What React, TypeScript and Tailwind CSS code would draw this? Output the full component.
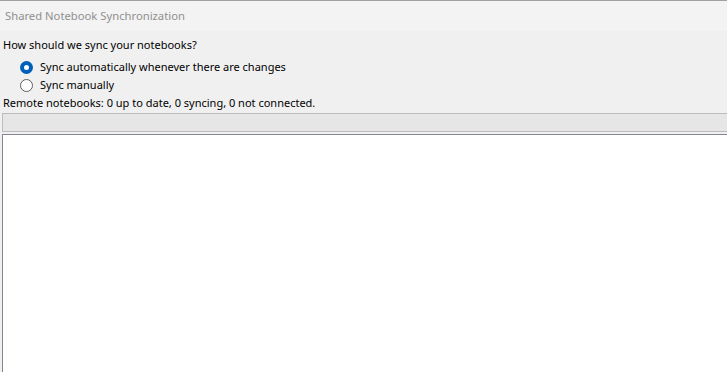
export default function App() {
  return (
    <div
      className="h-[372px] w-[727px] overflow-hidden flex flex-col bg-[#f0f0f0] text-[11px] text-black"
      style={{ fontFamily: '"Noto Sans", "Liberation Sans", sans-serif' }}
    >
      <div className="h-[31px] shrink-0 border-t border-[#a0a0a0] bg-[#f3f3f3] flex items-center pl-[5px] pt-[1px] text-[11.25px] text-[#909090]">
        Shared Notebook Synchronization
      </div>

      <div className="flex flex-col px-[3px] pt-[5px]">
        <p className="h-[18px] leading-[18px]">How should we sync your notebooks?</p>
        <div className="flex flex-col pl-[17px] pt-[4px]">
          <label className="flex items-center gap-[7px] h-[18px]">
            <span className="w-[13px] h-[13px] rounded-full bg-[#005fb8] flex items-center justify-center">
              <span className="w-[5px] h-[5px] rounded-full bg-white" />
            </span>
            <span>Sync automatically whenever there are changes</span>
          </label>
          <label className="flex items-center gap-[7px] h-[18px]">
            <span className="w-[13px] h-[13px] rounded-full border border-[#5d5d5d] bg-white" />
            <span>Sync manually</span>
          </label>
        </div>
        <p className="h-[18px] leading-[18px]">
          Remote notebooks: 0 up to date, 0 syncing, 0 not connected.
        </p>
      </div>

      <div className="ml-[2px] mt-[1px] h-[19px] shrink-0 border border-r-0 border-[#bcbcbc] bg-[#e6e6e6]" />

      <div className="ml-[2px] mt-[2px] flex-1 border-l border-t border-[#828790] bg-white" />
    </div>
  );
}
